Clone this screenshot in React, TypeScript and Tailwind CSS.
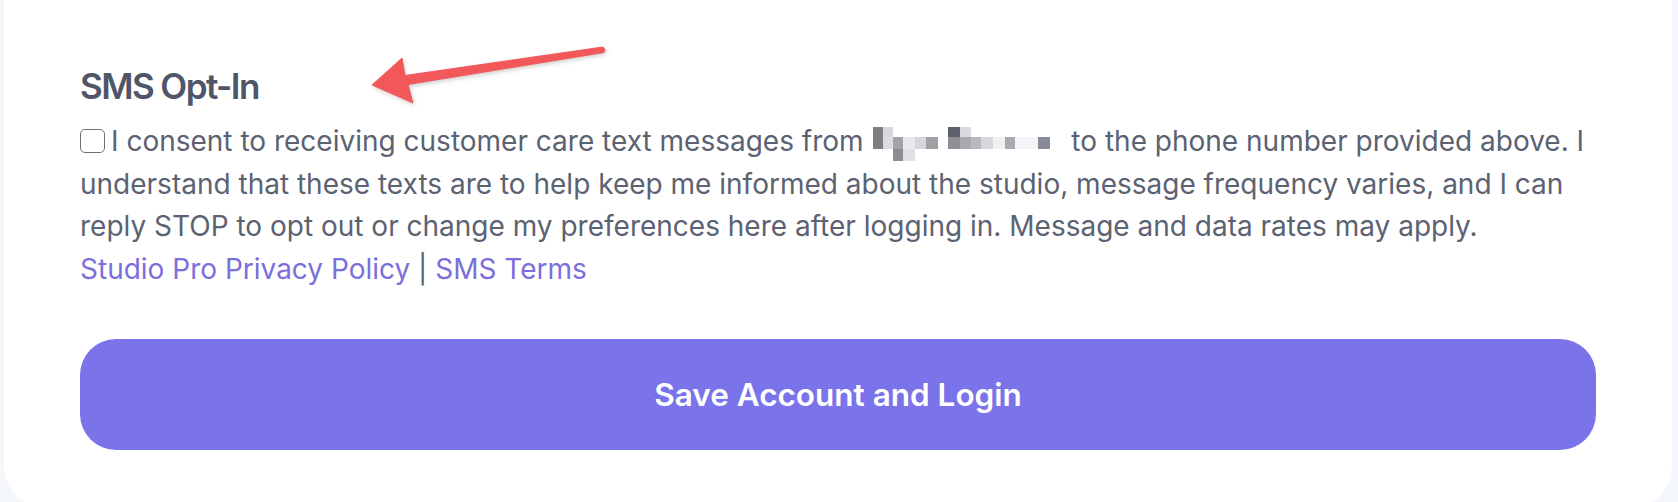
import React from "react";

const cells: [number, number, number, number, string][] = [
  [0, 0, 10, 22, "#7d7e84"],
  [10, 0, 10, 10, "#d6d8dc"],
  [10, 10, 10, 12, "#dcdde1"],
  [20, 10, 10, 12, "#a2a3a8"],
  [20, 22, 10, 12, "#8d8e93"],
  [30, 10, 12, 12, "#e8e9ec"],
  [30, 22, 12, 12, "#e0e1e4"],
  [42, 10, 11, 12, "#d5d7db"],
  [53, 10, 12, 12, "#a0a1a6"],
  [75, 0, 12, 10, "#5f616c"],
  [87, 0, 11, 10, "#d9dbe0"],
  [75, 10, 12, 12, "#8f9096"],
  [87, 10, 11, 12, "#a9aab0"],
  [98, 10, 10, 12, "#b7b9be"],
  [108, 10, 12, 12, "#d6d8dc"],
  [120, 10, 12, 12, "#f0f0f2"],
  [132, 10, 10, 12, "#a9aaaf"],
  [142, 10, 23, 12, "#f3f4f6"],
  [165, 10, 12, 12, "#878a98"],
];

function Redacted() {
  return (
    <svg
      width="192"
      height="34"
      viewBox="0 0 192 34"
      className="inline-block align-[-10px]"
    >
      {cells.map(([x, y, w, h, c], i) => (
        <rect key={i} x={x + 2} y={y} width={w} height={h} fill={c} />
      ))}
    </svg>
  );
}

export default function App() {
  return (
    <div className="h-[502px] w-full overflow-hidden bg-[#f3f7fb] pl-[4px] pr-[6px] font-['Inter','Liberation_Sans',sans-serif]">
      <div className="relative h-[508px] rounded-b-[42px] bg-white px-[76px] pt-[65px]">
        <svg
          className="absolute left-[336px] top-[30px] drop-shadow-[1px_2px_2px_rgba(0,0,0,0.18)]"
          width="280"
          height="80"
          viewBox="0 0 280 80"
        >
          <polygon
            points="32,55 62,28 65,45.5 263,17 265,19.5 264,22.5 68,54.5 73,73"
            fill="#f2585a"
            strokeLinejoin="round"
            stroke="#f2585a"
            strokeWidth="1"
          />
        </svg>
        <h2 className="text-[35px] font-semibold leading-[42px] tracking-[-0.045em] text-[#4f5668]">
          SMS Opt-In
        </h2>
        <p className="mt-[13px] text-[28px] leading-[42.5px] text-[#5b6272]">
          <span className="mr-[6px] inline-block h-[24px] w-[25px] rounded-[5px] border-[1.5px] border-[#6b6f78] bg-white align-[-2px]" />
          I consent to receiving customer care text messages from <Redacted /> to the phone
          number provided above. I understand that these texts are to help keep me informed
          about the studio, message frequency varies, and I can reply STOP to opt out or change
          my preferences here after logging in. Message and data rates may apply.
          <br />
          <a className="text-[#7b6fdc]">Studio Pro Privacy Policy</a>
          <span className="text-[#5b6272]"> | </span>
          <a className="text-[#7b6fdc]">SMS Terms</a>
        </p>
        <button className="mt-[49px] flex h-[111px] w-full items-center justify-center rounded-[36px] bg-[#7b73ea] text-[31.5px] font-semibold text-white">
          Save Account and Login
        </button>
      </div>
    </div>
  );
}
